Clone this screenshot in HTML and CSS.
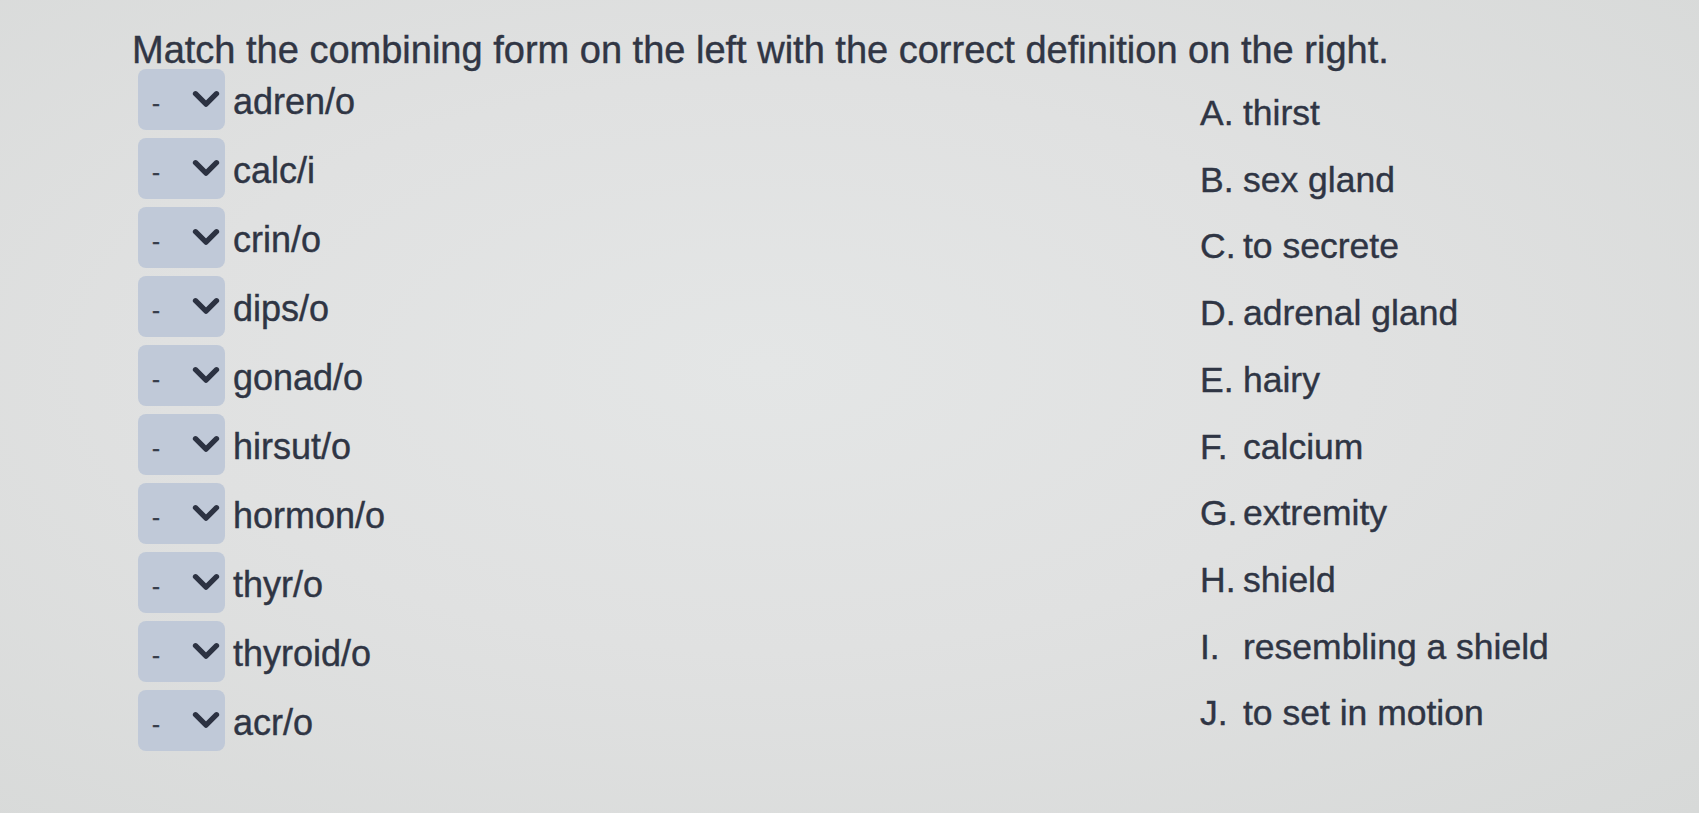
FILE: index.html
```html
<!DOCTYPE html>
<html lang="en">
<head>
    <meta charset="UTF-8">
    <meta name="viewport" content="width=device-width, initial-scale=1.0">
    <title>Matching</title>
    <link rel="stylesheet" href="styles.css">
</head>
<body>
    <div class="container">
        <h1 class="title">Match the combining form on the left with the correct definition on the right.</h1>

        <div class="matching">
            <div class="terms">
                <div class="term">
                    <div class="select"><span class="dash">-</span><svg class="chevron" viewBox="0 0 24 16"><path d="M3 3 L12 12 L21 3"/></svg></div>
                    <span class="label">adren/o</span>
                </div>
                <div class="term">
                    <div class="select"><span class="dash">-</span><svg class="chevron" viewBox="0 0 24 16"><path d="M3 3 L12 12 L21 3"/></svg></div>
                    <span class="label">calc/i</span>
                </div>
                <div class="term">
                    <div class="select"><span class="dash">-</span><svg class="chevron" viewBox="0 0 24 16"><path d="M3 3 L12 12 L21 3"/></svg></div>
                    <span class="label">crin/o</span>
                </div>
                <div class="term">
                    <div class="select"><span class="dash">-</span><svg class="chevron" viewBox="0 0 24 16"><path d="M3 3 L12 12 L21 3"/></svg></div>
                    <span class="label">dips/o</span>
                </div>
                <div class="term">
                    <div class="select"><span class="dash">-</span><svg class="chevron" viewBox="0 0 24 16"><path d="M3 3 L12 12 L21 3"/></svg></div>
                    <span class="label">gonad/o</span>
                </div>
                <div class="term">
                    <div class="select"><span class="dash">-</span><svg class="chevron" viewBox="0 0 24 16"><path d="M3 3 L12 12 L21 3"/></svg></div>
                    <span class="label">hirsut/o</span>
                </div>
                <div class="term">
                    <div class="select"><span class="dash">-</span><svg class="chevron" viewBox="0 0 24 16"><path d="M3 3 L12 12 L21 3"/></svg></div>
                    <span class="label">hormon/o</span>
                </div>
                <div class="term">
                    <div class="select"><span class="dash">-</span><svg class="chevron" viewBox="0 0 24 16"><path d="M3 3 L12 12 L21 3"/></svg></div>
                    <span class="label">thyr/o</span>
                </div>
                <div class="term">
                    <div class="select"><span class="dash">-</span><svg class="chevron" viewBox="0 0 24 16"><path d="M3 3 L12 12 L21 3"/></svg></div>
                    <span class="label">thyroid/o</span>
                </div>
                <div class="term">
                    <div class="select"><span class="dash">-</span><svg class="chevron" viewBox="0 0 24 16"><path d="M3 3 L12 12 L21 3"/></svg></div>
                    <span class="label">acr/o</span>
                </div>
            </div>

            <ol class="definitions">
                <li><span class="letter">A.</span>thirst</li>
                <li><span class="letter">B.</span>sex gland</li>
                <li><span class="letter">C.</span>to secrete</li>
                <li><span class="letter">D.</span>adrenal gland</li>
                <li><span class="letter">E.</span>hairy</li>
                <li><span class="letter">F.</span>calcium</li>
                <li><span class="letter">G.</span>extremity</li>
                <li><span class="letter">H.</span>shield</li>
                <li><span class="letter">I.</span>resembling a shield</li>
                <li><span class="letter">J.</span>to set in motion</li>
            </ol>
        </div>
    </div>
</body>
</html>
```

FILE: styles.css
```css
* {
    margin: 0;
    padding: 0;
    box-sizing: border-box;
    font-family: 'Liberation Sans', Arial, sans-serif;
}

html, body {
    height: 100%;
}

body {
    background: radial-gradient(ellipse at 45% 45%, #e4e6e6 0%, #e0e1e1 45%, #d7d9d8 100%);
    color: #2f3544;
    overflow: hidden;
    -webkit-text-stroke: 0.4px #2f3544;
}

.container {
    padding: 31px 0 0 132px;
}

.title {
    font-size: 38px;
    font-weight: normal;
    line-height: 38px;
    color: #313644;
}

.matching {
    display: flex;
}

.terms {
    width: 1068px;
    display: flex;
    flex-direction: column;
    gap: 8px;
    padding-left: 6px;
}

.term {
    display: flex;
    align-items: center;
    height: 61px;
}

.select {
    width: 87px;
    height: 61px;
    background: #c0c9d8;
    border-radius: 8px;
    display: flex;
    align-items: center;
    padding-left: 14px;
}

.dash {
    font-size: 24px;
    color: #3a3f4d;
    width: 40px;
    padding-top: 6px;
}

.chevron {
    width: 28px;
    height: 19px;
    fill: none;
    stroke: #2c3242;
    stroke-width: 4.5;
    stroke-linecap: round;
    stroke-linejoin: round;
}

.label {
    font-size: 36px;
    line-height: 61px;
    padding: 3px 0 0 8px;
}

.definitions {
    list-style: none;
    padding-top: 11px;
}

.definitions li {
    font-size: 35.5px;
    line-height: 66.7px;
    white-space: nowrap;
}

.letter {
    display: inline-block;
    width: 43px;
}
```
